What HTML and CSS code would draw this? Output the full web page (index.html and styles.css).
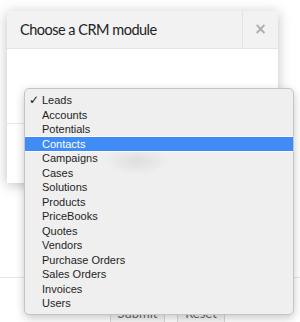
FILE: index.html
```html
<!DOCTYPE html>
<html lang="en">
<head>
  <meta charset="UTF-8" />
  <title>Choose a CRM module</title>
  <link rel="stylesheet" href="styles.css">
</head>
<body>
  <div class="page">
    <div class="page-body"></div>
    <div class="page-footer">
      <button class="btn">Submit</button>
      <button class="btn">Reset</button>
    </div>
  </div>

  <div class="modal">
    <div class="modal-header">
      <h3 class="modal-title">Choose a CRM module</h3>
      <div class="modal-close">&times;</div>
    </div>
    <div class="modal-body"></div>
    <div class="modal-footer"></div>
  </div>

  <ul class="select-menu">
    <li class="option checked">Leads</li>
    <li class="option">Accounts</li>
    <li class="option">Potentials</li>
    <li class="option active">Contacts</li>
    <li class="option">Campaigns</li>
    <li class="option">Cases</li>
    <li class="option">Solutions</li>
    <li class="option">Products</li>
    <li class="option">PriceBooks</li>
    <li class="option">Quotes</li>
    <li class="option">Vendors</li>
    <li class="option">Purchase Orders</li>
    <li class="option">Sales Orders</li>
    <li class="option">Invoices</li>
    <li class="option">Users</li>
  </ul>
</body>
</html>
```

FILE: styles.css
```css
html, body {
  margin: 0;
  padding: 0;
  background: #fff;
  overflow: hidden;
}
body {
  width: 300px;
  height: 322px;
  position: relative;
  font-family: "Liberation Sans", Arial, sans-serif;
}
.page-body {
  height: 277px;
  border-bottom: 1px solid #e6e6e6;
}
.page-footer {
  display: flex;
  gap: 12px;
  padding: 20px 0 0 110px;
}
.btn {
  width: 55px;
  height: 30px;
  font-family: "Lato", sans-serif;
  font-size: 13px;
  color: #666;
  background: #f7f7f7;
  border: 1px solid #d9d9d9;
  border-radius: 2px;
  padding: 0;
}
.btn + .btn {
  width: 48px;
}

.modal {
  position: absolute;
  left: 7px;
  top: 11px;
  width: 271px;
  height: 172px;
  background: #fff;
  box-shadow: 0 2px 12px rgba(0,0,0,0.25);
  display: flex;
  flex-direction: column;
}
.modal-header {
  display: flex;
  height: 37px;
  background: #f2f2f2;
  border-bottom: 1px solid #e4e4e4;
}
.modal-title {
  flex: 1;
  margin: 0;
  padding-left: 13px;
  font-family: "Lato", sans-serif;
  font-weight: normal;
  font-size: 14.5px;
  letter-spacing: -0.5px;
  line-height: 37px;
  color: #222;
}
.modal-close {
  width: 35px;
  border-left: 1px solid #e2e2e2;
  text-align: center;
  font-family: "DejaVu Sans", sans-serif;
  font-weight: bold;
  font-size: 15px;
  line-height: 37px;
  color: #acacac;
}
.modal-body {
  height: 74px;
  border-bottom: 1px solid #e8e8e8;
}

.select-menu {
  position: absolute;
  left: 24px;
  top: 88px;
  width: 268px;
  margin: 0;
  padding: 4px 0 3px;
  list-style: none;
  background-color: #efefef;
  background-image: radial-gradient(ellipse 32px 14px at 112px 72px, rgba(0,0,0,0.07), rgba(0,0,0,0));
  border: 1px solid #c4c4c4;
  border-radius: 5px;
  box-shadow: 0 3px 10px rgba(0,0,0,0.22);
}
.option {
  position: relative;
  height: 14.5px;
  line-height: 14.5px;
  padding-left: 17px;
  font-size: 11px;
  color: #1e1e1e;
}
.option.checked::before {
  content: "\2713";
  position: absolute;
  left: 4px;
  top: 0;
  font-family: "DejaVu Sans", sans-serif;
  font-size: 12px;
  color: #111;
}
.option.active {
  background: #3f8cf6;
  color: #fff;
  box-shadow: 0 -1px 0 #fff, 0 1px 0 #fff;
}
```
